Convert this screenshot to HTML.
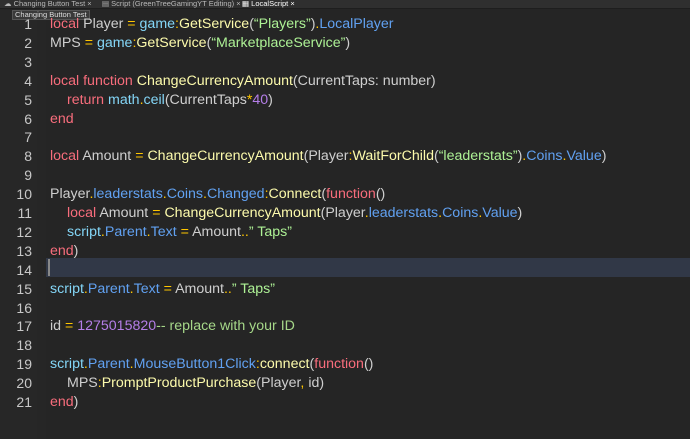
<!DOCTYPE html>
<html><head><meta charset="utf-8"><style>
*{margin:0;padding:0;box-sizing:border-box}
body{width:690px;height:439px;overflow:hidden;background:#252525;font-family:"Liberation Sans","DejaVu Sans",sans-serif;position:relative}
.tabs{position:absolute;left:0;top:0;width:690px;height:9px;background:#2f2f2f;border-bottom:1px solid #1e1e1e;font-size:7.5px;color:#b8b8b8;line-height:8px;white-space:nowrap;overflow:hidden}
.tabs span{position:absolute;top:0}
.tip{position:absolute;left:12px;top:10px;height:10px;padding:0 2px;background:#3a3a3a;border:1px solid #555;font-size:7.5px;line-height:8px;color:#ddd;white-space:nowrap}
.gut{position:absolute;left:0;top:10px;width:37px;height:429px;background:#272727}
.gut2{position:absolute;left:37px;top:10px;width:9px;height:429px;background:#262626}
.hl{position:absolute;left:46px;top:258px;width:644px;height:19px;background:#313847}
.cur{position:absolute;left:48px;top:259px;width:2px;height:17px;background:#888}
.ln{position:absolute;left:0;width:32px;text-align:right;font-size:14px;color:#c8c8c8}
.cl{position:absolute;left:50px;font-size:14.2px;color:#cfcfcf;white-space:pre}
.k{color:#f86d7c}.o{color:#ffc600}.g{color:#84d6f7}.m{color:#fdfbac}.s{color:#adf195}.n{color:#b57ee8}.p{color:#61a1f1}.c{color:#a6d889}
</style></head><body>
<div class="tabs"><span style="left:4px">☁ Changing Button Test ×</span><span style="left:102px">▤ Script (GreenTreeGamingYT Editing) ×</span><span style="left:242px;color:#fff">▦ LocalScript ×</span></div>
<div class="gut"></div><div class="gut2"></div>
<div class="hl"></div><div class="cur"></div>
<div class="tip">Changing Button Test</div>
<div id="c"></div>
<script>
var L=[
'<span class="k">local</span> Player <span class="o">=</span> <span class="g">game</span><span class="o">:</span><span class="m">GetService</span>(<span class="s">“Players”</span>)<span class="o">.</span><span class="p">LocalPlayer</span>',
'MPS <span class="o">=</span> <span class="g">game</span><span class="o">:</span><span class="m">GetService</span>(<span class="s">“MarketplaceService”</span>)',
'',
'<span class="k">local function</span> <span class="m">ChangeCurrencyAmount</span>(CurrentTaps: number)',
'    <span class="k">return</span> <span class="g">math</span><span class="o">.</span><span class="g">ceil</span>(CurrentTaps<span class="o">*</span><span class="n">40</span>)',
'<span class="k">end</span>',
'',
'<span class="k">local</span> Amount <span class="o">=</span> <span class="m">ChangeCurrencyAmount</span>(Player<span class="o">:</span><span class="m">WaitForChild</span>(<span class="s">“leaderstats”</span>)<span class="o">.</span><span class="p">Coins</span><span class="o">.</span><span class="p">Value</span>)',
'',
'Player<span class="o">.</span><span class="p">leaderstats</span><span class="o">.</span><span class="p">Coins</span><span class="o">.</span><span class="p">Changed</span><span class="o">:</span><span class="m">Connect</span>(<span class="k">function</span>()',
'    <span class="k">local</span> Amount <span class="o">=</span> <span class="m">ChangeCurrencyAmount</span>(Player<span class="o">.</span><span class="p">leaderstats</span><span class="o">.</span><span class="p">Coins</span><span class="o">.</span><span class="p">Value</span>)',
'    <span class="g">script</span><span class="o">.</span><span class="p">Parent</span><span class="o">.</span><span class="p">Text</span> <span class="o">=</span> Amount<span class="o">..</span><span class="s">” Taps”</span>',
'<span class="k">end</span>)',
'',
'<span class="g">script</span><span class="o">.</span><span class="p">Parent</span><span class="o">.</span><span class="p">Text</span> <span class="o">=</span> Amount<span class="o">..</span><span class="s">” Taps”</span>',
'',
'id <span class="o">=</span> <span class="n">1275015820</span><span class="c">-- replace with your ID</span>',
'',
'<span class="g">script</span><span class="o">.</span><span class="p">Parent</span><span class="o">.</span><span class="p">MouseButton1Click</span><span class="o">:</span><span class="m">connect</span>(<span class="k">function</span>()',
'    MPS<span class="o">:</span><span class="m">PromptProductPurchase</span>(Player<span class="o">,</span> id)',
'<span class="k">end</span>)'];
var h='';
for(var i=0;i<L.length;i++){var t=16+i*18.9;
h+='<div class="ln" style="top:'+t+'px">'+(i+1)+'</div><div class="cl" style="top:'+t+'px">'+L[i].replace(/^    /,'<span style="display:inline-block;width:17px"></span>')+'</div>';}
document.getElementById('c').innerHTML=h;
</script>
</body></html>
